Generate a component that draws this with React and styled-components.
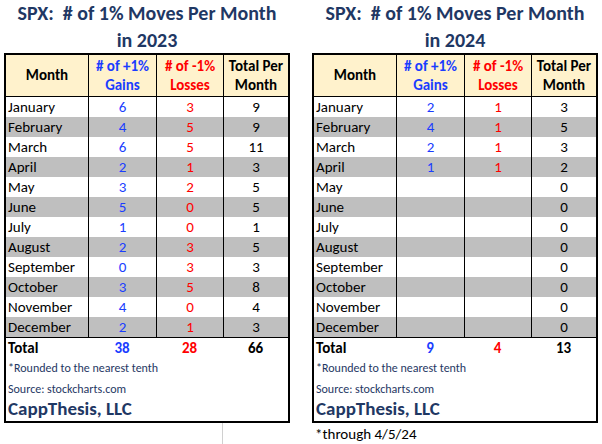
import React from 'react';
import styled, { createGlobalStyle } from 'styled-components';

const GlobalStyle = createGlobalStyle`
  body {
    margin: 0;
    background: #ffffff;
    font-family: Carlito, Lato, "Liberation Sans", sans-serif;
  }
`;

const NAVY = '#1f3864';
const BLUE = '#1a3dff';
const RED = '#ff0000';
const COLS = '82px 68px 67px 65px';

const Page = styled.div`
  display: flex;
  gap: 22px;
  padding-left: 4px;
  width: 602px;
  height: 444px;
  box-sizing: border-box;
  overflow: hidden;
`;

const Panel = styled.div`
  width: 286px;
  display: flex;
  flex-direction: column;
`;

const Title = styled.div`
  height: 53px;
  line-height: 27px;
  text-align: center;
  font-size: 20px;
  font-weight: 900;
  color: ${NAVY};
  white-space: pre;
`;

const Box = styled.div`
  border: 2px solid #000;
`;

const HeaderRow = styled.div`
  display: grid;
  grid-template-columns: ${COLS};
  height: 42px;
  background: #fff2cc;
  border-bottom: 1px solid #000;
  box-sizing: border-box;
`;

const HeadCell = styled.div`
  display: flex;
  align-items: center;
  justify-content: center;
  text-align: center;
  font-size: 15px;
  font-weight: bold;
  line-height: 19px;
  color: ${(p) => p.color || '#000'};
  & + & {
    border-left: 1px solid #000;
  }
`;

const Body = styled.div`
  border-bottom: 1px solid #000;
`;

const DataRow = styled.div`
  display: grid;
  grid-template-columns: ${COLS};
  height: 20px;
  background: ${(p) => (p.shaded ? '#bfbfbf' : '#ffffff')};
`;

const Cell = styled.div`
  font-size: 15px;
  line-height: 20px;
  color: ${(p) => p.color || '#000'};
  text-align: ${(p) => (p.left ? 'left' : 'center')};
  padding-left: ${(p) => (p.left ? '2px' : '0')};
  white-space: nowrap;
  & + & {
    border-left: 1px solid #000;
  }
`;

const TotalRow = styled.div`
  display: grid;
  grid-template-columns: ${COLS};
  height: 20px;
`;

const TotalCell = styled.div`
  font-size: 15px;
  font-weight: bold;
  line-height: 20px;
  color: ${(p) => p.color || '#000'};
  text-align: ${(p) => (p.left ? 'left' : 'center')};
  padding-left: ${(p) => (p.left ? '2px' : '0')};
`;

const Notes = styled.div`
  padding: 0 0 2px 2px;
  color: ${NAVY};
`;

const Note = styled.div`
  font-size: 12px;
  line-height: ${(p) => p.lh || 20}px;
`;

const Brand = styled.div`
  font-size: 19px;
  font-weight: bold;
  line-height: 20px;
`;

const Through = styled.div`
  padding: 2px 0 0 3px;
  font-size: 15px;
  line-height: 19px;
  color: #000;
`;

const GridLine = styled.div`
  margin-left: 218px;
  width: 1px;
  height: 21px;
  background: #d0d0d0;
`;

const MONTHS = [
  'January', 'February', 'March', 'April', 'May', 'June',
  'July', 'August', 'September', 'October', 'November', 'December',
];

const data2023 = {
  year: 2023,
  gains: [6, 4, 6, 2, 3, 5, 1, 2, 0, 3, 4, 2],
  losses: [3, 5, 5, 1, 2, 0, 0, 3, 3, 5, 0, 1],
  totals: [9, 9, 11, 3, 5, 5, 1, 5, 3, 8, 4, 3],
  sum: [38, 28, 66],
};

const data2024 = {
  year: 2024,
  gains: [2, 4, 2, 1],
  losses: [1, 1, 1, 1],
  totals: [3, 5, 3, 2, 0, 0, 0, 0, 0, 0, 0, 0],
  sum: [9, 4, 13],
};

const MovesTable = ({ data }) => (
  <>
    <Title>{`SPX:  # of 1% Moves Per Month\nin ${data.year}`}</Title>
    <Box>
      <HeaderRow>
        <HeadCell>Month</HeadCell>
        <HeadCell color={BLUE}># of +1%<br />Gains</HeadCell>
        <HeadCell color={RED}># of -1%<br />Losses</HeadCell>
        <HeadCell>Total Per<br />Month</HeadCell>
      </HeaderRow>
      <Body>
        {MONTHS.map((m, i) => (
          <DataRow key={m} shaded={i % 2 === 1}>
            <Cell left>{m}</Cell>
            <Cell color={BLUE}>{data.gains[i] ?? ''}</Cell>
            <Cell color={RED}>{data.losses[i] ?? ''}</Cell>
            <Cell>{data.totals[i]}</Cell>
          </DataRow>
        ))}
      </Body>
      <TotalRow>
        <TotalCell left>Total</TotalCell>
        <TotalCell color={BLUE}>{data.sum[0]}</TotalCell>
        <TotalCell color={RED}>{data.sum[1]}</TotalCell>
        <TotalCell>{data.sum[2]}</TotalCell>
      </TotalRow>
      <Notes>
        <Note lh={21}>*Rounded to the nearest tenth</Note>
        <Note>Source: stockcharts.com</Note>
        <Brand>CappThesis, LLC</Brand>
      </Notes>
    </Box>
  </>
);

const App = () => (
  <>
    <GlobalStyle />
    <Page>
      <Panel>
        <MovesTable data={data2023} />
        <GridLine />
      </Panel>
      <Panel>
        <MovesTable data={data2024} />
        <Through>*through 4/5/24</Through>
      </Panel>
    </Page>
  </>
);

export default App;
